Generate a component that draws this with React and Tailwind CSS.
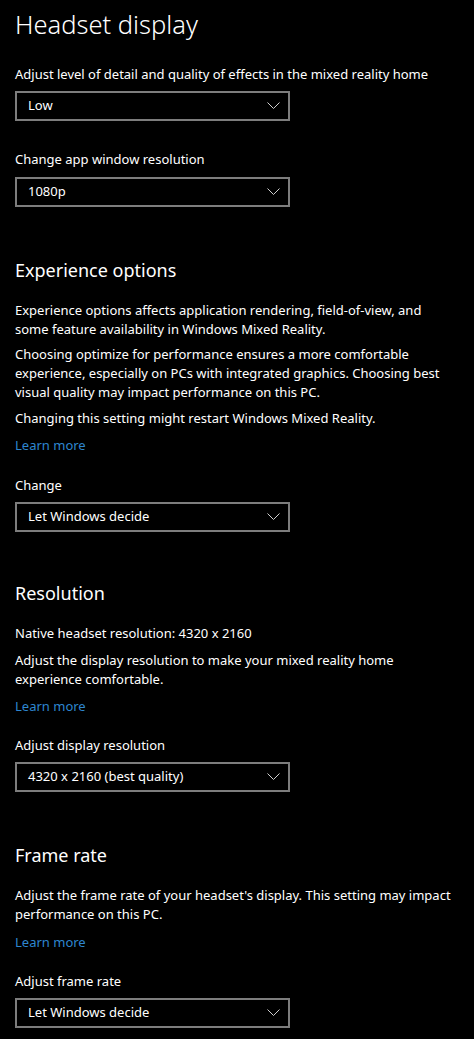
import React from 'react';

const font = { fontFamily: '"Noto Sans", "Open Sans", sans-serif' };

const Dropdown = ({ value }) => (
  <div className="w-[275px] h-[30px] border-2 border-[#7d7d7d] flex items-center justify-between pl-[11px] pr-[8px] text-[13px] text-white">
    <span>{value}</span>
    <svg width="13" height="8" viewBox="0 0 13 8" fill="none">
      <path d="M0.5 0.5 L6.5 6.5 L12.5 0.5" stroke="#cfcfcf" strokeWidth="1" />
    </svg>
  </div>
);

const Label = ({ children, className = '' }) => (
  <p className={`text-[13px] leading-[19px] text-white whitespace-nowrap ${className}`}>{children}</p>
);

const Link = ({ className = '' }) => (
  <p className={`text-[13px] leading-[19px] text-[#2e86cf] ${className}`}>Learn more</p>
);

const Heading = ({ children, className = '' }) => (
  <h2 className={`text-[18px] leading-[28px] text-white ${className}`}>{children}</h2>
);

export default function App() {
  return (
    <div className="min-h-screen bg-black pl-[15px] pb-4" style={font}>
      <h1 className="text-[25.5px] leading-[36px] font-light text-white pt-[6px]">Headset display</h1>

      {/* detail level */}
      <Label className="mt-[23px]">Adjust level of detail and quality of effects in the mixed reality home</Label>
      <div className="mt-[7px]"><Dropdown value="Low" /></div>

      <Label className="mt-[29px]">Change app window resolution</Label>
      <div className="mt-[8px]"><Dropdown value="1080p" /></div>

      {/* Experience options */}
      <Heading className="mt-[49px]">Experience options</Heading>
      <Label className="mt-[17px]">
        Experience options affects application rendering, field-of-view, and<br />
        some feature availability in Windows Mixed Reality.
      </Label>
      <Label className="mt-[6px]">
        Choosing optimize for performance ensures a more comfortable<br />
        experience, especially on PCs with integrated graphics. Choosing best<br />
        visual quality may impact performance on this PC.
      </Label>
      <Label className="mt-[7px]">Changing this setting might restart Windows Mixed Reality.</Label>
      <Link className="mt-[8px]" />
      <Label className="mt-[21px]">Change</Label>
      <div className="mt-[7px]"><Dropdown value="Let Windows decide" /></div>

      {/* Resolution */}
      <Heading className="mt-[47px]">Resolution</Heading>
      <Label className="mt-[17px]">Native headset resolution: 4320 x 2160</Label>
      <Label className="mt-[8px]">
        Adjust the display resolution to make your mixed reality home<br />
        experience comfortable.
      </Label>
      <Link className="mt-[8px]" />
      <Label className="mt-[20px]">Adjust display resolution</Label>
      <div className="mt-[7px]"><Dropdown value="4320 x 2160 (best quality)" /></div>

      {/* Frame rate */}
      <Heading className="mt-[49px]">Frame rate</Heading>
      <Label className="mt-[17px]">
        Adjust the frame rate of your headset's display. This setting may impact<br />
        performance on this PC.
      </Label>
      <Link className="mt-[9px]" />
      <Label className="mt-[20px]">Adjust frame rate</Label>
      <div className="mt-[7px]"><Dropdown value="Let Windows decide" /></div>
    </div>
  );
}
